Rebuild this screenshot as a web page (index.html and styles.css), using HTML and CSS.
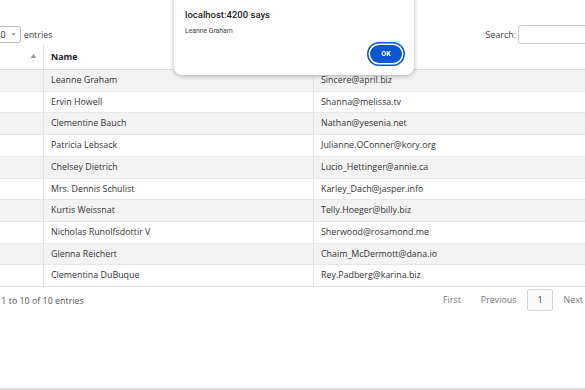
FILE: index.html
```html
<!DOCTYPE html>
<html lang="en">
<head>
  <meta charset="UTF-8">
  <title>Users</title>
  <link rel="stylesheet" href="styles.css">
</head>
<body>

  <div class="page">
    <!-- length + search -->
    <div class="top-controls">
      <div class="length">
        Show
        <span class="select-box">10 <span class="chev">&#8964;</span></span>
        entries
      </div>
      <div class="search">
        Search:
        <span class="search-input"></span>
      </div>
    </div>

    <table class="users">
      <thead>
        <tr>
          <th class="col-id">Id <svg class="sort" width="7" height="10" viewBox="0 0 7 10"><path d="M3.5 1 L6.5 5 L0.5 5 Z" fill="#9a9a9a"/><path d="M1.5 7 L5.5 7 L3.5 9.5 Z" fill="#e6e6e6"/></svg></th>
          <th class="col-name">Name</th>
          <th class="col-email">Email</th>
        </tr>
      </thead>
      <tbody>
        <tr><td>1</td><td>Leanne Graham</td><td>Sincere@april.biz</td></tr>
        <tr><td>2</td><td>Ervin Howell</td><td>Shanna@melissa.tv</td></tr>
        <tr><td>3</td><td>Clementine Bauch</td><td>Nathan@yesenia.net</td></tr>
        <tr><td>4</td><td>Patricia Lebsack</td><td>Julianne.OConner@kory.org</td></tr>
        <tr><td>5</td><td>Chelsey Dietrich</td><td>Lucio_Hettinger@annie.ca</td></tr>
        <tr><td>6</td><td>Mrs. Dennis Schulist</td><td>Karley_Dach@jasper.info</td></tr>
        <tr><td>7</td><td>Kurtis Weissnat</td><td>Telly.Hoeger@billy.biz</td></tr>
        <tr><td>8</td><td>Nicholas Runolfsdottir V</td><td>Sherwood@rosamond.me</td></tr>
        <tr><td>9</td><td>Glenna Reichert</td><td>Chaim_McDermott@dana.io</td></tr>
        <tr><td>10</td><td>Clementina DuBuque</td><td>Rey.Padberg@karina.biz</td></tr>
      </tbody>
    </table>

    <div class="bottom-controls">
      <div class="info">Showing 1 to 10 of 10 entries</div>
      <div class="paging">
        <span class="pg">First</span>
        <span class="pg">Previous</span>
        <span class="pg current">1</span>
        <span class="pg">Next</span>
        <span class="pg">Last</span>
      </div>
    </div>

    <div class="footer-line"></div>
  </div>

  <!-- browser alert -->
  <div class="alert">
    <div class="alert-title">localhost:4200 says</div>
    <div class="alert-msg">Leanne Graham</div>
    <div class="alert-actions">
      <button class="ok-btn">OK</button>
    </div>
  </div>

</body>
</html>
```
FILE: styles.css
```css
body {
  margin: 0;
  overflow: hidden;
  font-family: 'Open Sans', sans-serif;
  font-size: 8.9px;
  color: #333;
  background-color: white;
}

.page {
  width: 673px;
  margin-left: -44px;
  padding-top: 25px;
}

.top-controls {
  display: flex;
  justify-content: space-between;
  align-items: center;
  height: 19px;
  color: #444;
}

.length {
  display: flex;
  align-items: center;
  gap: 3px;
}

.select-box {
  display: inline-flex;
  align-items: center;
  gap: 4px;
  height: 17px;
  margin-left: 7px;
  padding: 0 3px 0 6px;
  border: 1px solid #bbb;
  border-radius: 3px;
  box-sizing: border-box;
  color: #222;
}

.chev {
  font-size: 8px;
  line-height: 1;
  margin-top: -5px;
  color: #555;
}

.search {
  display: flex;
  align-items: center;
  gap: 2px;
}

.search-input {
  display: inline-block;
  width: 111px;
  height: 19px;
  border: 1px solid #ccc;
  border-radius: 3px;
  box-sizing: border-box;
}

.users {
  width: 100%;
  margin-top: 1px;
  border-collapse: collapse;
}

.users th,
.users td {
  text-align: left;
  padding: 4px 7px;
  line-height: 12.7px;
  border-right: 1px solid #e2e2e2;
}

.users th:last-child,
.users td:last-child {
  border-right: none;
}

.users th {
  height: 14px;
  padding: 5px 7px;
  font-weight: bold;
  color: #222;
  border-bottom: 1px solid #dcdcdc;
}

.users td {
  border-top: 1px solid #e8e8e8;
}

.users tbody tr:nth-child(odd) {
  background-color: #f3f3f3;
}

.users tbody tr:last-child td {
  border-bottom: 1px solid #dcdcdc;
}

.col-id {
  width: 73px;
  position: relative;
}

.col-name {
  width: 255px;
}

.sort {
  position: absolute;
  right: 6px;
  top: 8px;
}

.bottom-controls {
  display: flex;
  justify-content: space-between;
  align-items: center;
  margin-top: 2px;
  color: #555;
}

.info {
  margin-left: 8px;
}

.paging {
  display: flex;
}

.pg {
  padding: 4px 8px;
  margin-left: 2px;
  line-height: 12px;
  color: #777;
  border: 1px solid transparent;
  border-radius: 2px;
}

.pg.current {
  padding: 4px 9px;
  color: #333;
  border-color: #d6d6d6;
  background-color: #fafafa;
}

.footer-line {
  margin-top: 77px;
  border-top: 2px solid #e0e0e0;
}

.alert {
  position: absolute;
  top: -10px;
  left: 174px;
  width: 240px;
  height: 85px;
  box-sizing: border-box;
  padding: 18px 10px 0 11px;
  background-color: white;
  border-radius: 8px;
  box-shadow: 0 1px 5px rgba(0, 0, 0, 0.3);
}

.alert-title {
  font-family: 'Roboto', sans-serif;
  font-size: 9.5px;
  font-weight: 500;
  color: #1f1f1f;
  line-height: 13px;
}

.alert-msg {
  font-family: 'Roboto', sans-serif;
  font-size: 6.8px;
  color: #444;
  margin-top: 6px;
}

.alert-actions {
  display: flex;
  justify-content: flex-end;
  margin-top: 10px;
  padding-right: 2px;
}

.ok-btn {
  width: 32px;
  height: 18px;
  padding: 0;
  border: none;
  border-radius: 999px;
  background-color: #0b57d0;
  color: white;
  font-family: 'Roboto', sans-serif;
  font-size: 7px;
  font-weight: bold;
  box-shadow: 0 0 0 1.5px white, 0 0 0 3px #0b57d0;
}
```
